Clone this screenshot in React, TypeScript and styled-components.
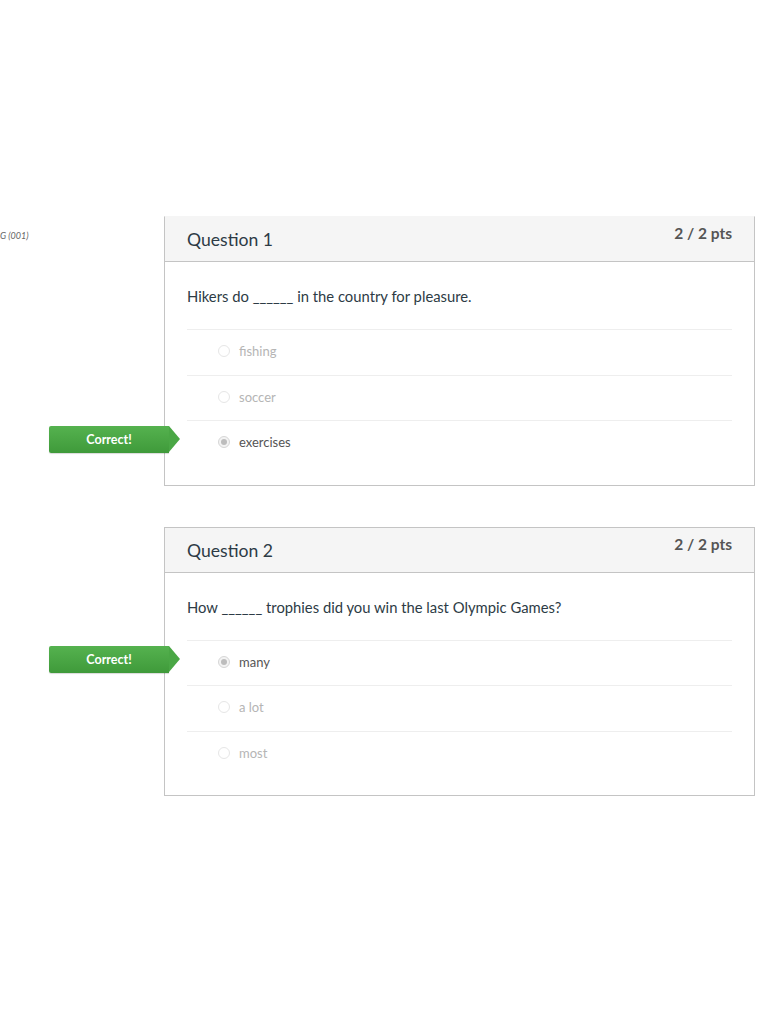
import React from "react";
import styled, { createGlobalStyle } from "styled-components";

const Global = createGlobalStyle`
  html, body { margin: 0; padding: 0; background: #ffffff; }
  body { font-family: Lato, "Open Sans", "Liberation Sans", sans-serif; }
`;

const Page = styled.div`
  padding-top: 216px;
  display: flex;
  align-items: flex-start;
  width: 768px;
`;

const Side = styled.div`
  width: 164px;
  flex-shrink: 0;
  padding-top: 14px;
`;

const SideLabel = styled.div`
  font-size: 9px;
  font-style: italic;
  color: #666;
  white-space: nowrap;
  line-height: 12px;
`;

const Column = styled.div`
  width: 591px;
  display: flex;
  flex-direction: column;
  gap: 41px;
`;

const Card = styled.section<{ $noTop?: boolean }>`
  border: 1px solid #c4c4c4;
  ${(p) => (p.$noTop ? "border-top-color: #f5f5f5;" : "")}
  background: #fff;
`;

const Header = styled.div`
  height: 44px;
  background: #f5f5f5;
  border-bottom: 1px solid #c4c4c4;
  display: flex;
  justify-content: space-between;
  align-items: flex-start;
  padding: 0 22px;
`;

const Title = styled.h2`
  margin: 0;
  padding-top: 12px;
  font-size: 17.6px;
  font-weight: 400;
  color: #2d3b45;
  line-height: 22px;
`;

const Points = styled.div`
  padding-top: 7px;
  font-size: 15.5px;
  font-weight: 700;
  color: #555;
  line-height: 19px;
`;

const Body = styled.div`
  padding: 25px 22px 19px;
`;

const Prompt = styled.p`
  margin: 0 0 24px;
  font-size: 14.8px;
  line-height: 18px;
  color: #2d3b45;
`;

const Option = styled.div`
  position: relative;
  height: 45.5px;
  border-top: 1px solid #eeeeee;
  display: flex;
  align-items: center;
  padding-left: 31px;
  gap: 9px;
  box-sizing: border-box;
  padding-bottom: 2px;
`;

const Radio = styled.span<{ $checked?: boolean }>`
  width: 12px;
  height: 12px;
  border-radius: 50%;
  border: 1px solid ${(p) => (p.$checked ? "#d6d6d6" : "#e6e6e6")};
  background: ${(p) => (p.$checked ? "#f3f3f3" : "#fff")};
  display: flex;
  align-items: center;
  justify-content: center;
  box-sizing: border-box;
  &::after {
    content: "";
    width: 6px;
    height: 6px;
    border-radius: 50%;
    background: ${(p) => (p.$checked ? "#bdbdbd" : "transparent")};
  }
`;

const OptionText = styled.span<{ $checked?: boolean }>`
  font-size: 13px;
  color: ${(p) => (p.$checked ? "#555" : "#b5b5b5")};
`;

const Badge = styled.div`
  position: absolute;
  left: -138px;
  top: 5px;
  height: 27px;
  width: 120px;
  background: linear-gradient(#55b24f, #3f9a3a);
  border-radius: 2px 0 0 2px;
  color: #fff;
  font-size: 12.5px;
  font-weight: 700;
  display: flex;
  align-items: center;
  justify-content: center;
  box-shadow: 0 1px 1px rgba(0, 0, 0, 0.15);
  &::after {
    content: "";
    position: absolute;
    right: -11px;
    top: 0;
    border-top: 13.5px solid transparent;
    border-bottom: 13.5px solid transparent;
    border-left: 11px solid #4aa745;
  }
`;

type Q = {
  title: string;
  prompt: string;
  options: string[];
  answer: number;
  noTop?: boolean;
};

const questions: Q[] = [
  {
    title: "Question 1",
    prompt: "Hikers do ______ in the country for pleasure.",
    options: ["fishing", "soccer", "exercises"],
    answer: 2,
    noTop: true,
  },
  {
    title: "Question 2",
    prompt: "How ______ trophies did you win the last Olympic Games?",
    options: ["many", "a lot", "most"],
    answer: 0,
  },
];

export default function App() {
  return (
    <>
      <Global />
      <Page>
        <Side>
          <SideLabel>G (001)</SideLabel>
        </Side>
        <Column>
          {questions.map((q) => (
            <Card key={q.title} $noTop={q.noTop}>
              <Header>
                <Title>{q.title}</Title>
                <Points>2 / 2 pts</Points>
              </Header>
              <Body>
                <Prompt>{q.prompt}</Prompt>
                {q.options.map((o, i) => (
                  <Option key={o}>
                    {i === q.answer && <Badge>Correct!</Badge>}
                    <Radio $checked={i === q.answer} />
                    <OptionText $checked={i === q.answer}>{o}</OptionText>
                  </Option>
                ))}
              </Body>
            </Card>
          ))}
        </Column>
      </Page>
    </>
  );
}
